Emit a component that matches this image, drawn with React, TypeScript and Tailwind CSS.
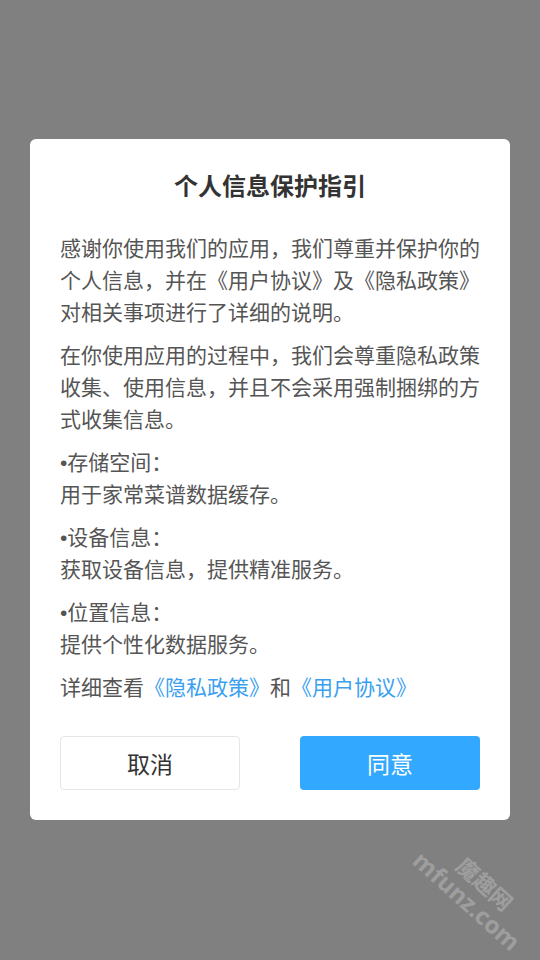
const FONT = '"Noto Sans CJK SC", "Noto Sans", sans-serif';

const Section = ({ children, className = '' }: { children: React.ReactNode; className?: string }) => (
  <p className={`text-[21px] leading-[32px] text-[#555555] ${className}`}>{children}</p>
);

// narrow bullet, the CJK font's one is full width
const Dot = () => <span className="leading-none" style={{ fontFamily: '"Liberation Sans", sans-serif' }}>•</span>;

export default function App() {
  return (
    <div className="relative w-[540px] h-[960px] overflow-hidden bg-[#808080] flex justify-center" style={{ fontFamily: FONT }}>
      <div className="mt-[139px] w-[480px] self-start rounded-[6px] bg-white px-[30px] pt-[28px] pb-[30px]">
        <h1 className="text-center text-[24px] leading-[36px] font-bold text-[#333333]">个人信息保护指引</h1>
        <div className="mt-[28px] flex flex-col gap-[11px]">
          <Section>感谢你使用我们的应用，我们尊重并保护你的个人信息，并在《用户协议》及《隐私政策》对相关事项进行了详细的说明。</Section>
          <Section>在你使用应用的过程中，我们会尊重隐私政策收集、使用信息，并且不会采用强制捆绑的方式收集信息。</Section>
          <Section><Dot />存储空间：<br />用于家常菜谱数据缓存。</Section>
          <Section><Dot />设备信息：<br />获取设备信息，提供精准服务。</Section>
          <Section><Dot />位置信息：<br />提供个性化数据服务。</Section>
          <Section>
            详细查看<span className="text-[#3a9ff0]">《隐私政策》</span>和<span className="text-[#3a9ff0]">《用户协议》</span>
          </Section>
        </div>
        <div className="mt-[34px] flex justify-between">
          <button className="h-[54px] w-[180px] rounded-[4px] border border-[#e6e6e6] bg-white text-[23px] text-[#333333]">取消</button>
          <button className="h-[54px] w-[180px] rounded-[4px] bg-[#33a8ff] text-[23px] text-white">同意</button>
        </div>
      </div>
      <div className="absolute left-[408px] top-[866px] rotate-[42deg] select-none text-[#9e9e9e]">
        <div className="pl-[36px] text-[22px] leading-[24px] font-bold">魔趣网</div>
        <div className="text-[24px] leading-[28px] font-bold" style={{ fontFamily: '"Open Sans", sans-serif' }}>mfunz.com</div>
      </div>
    </div>
  );
}
